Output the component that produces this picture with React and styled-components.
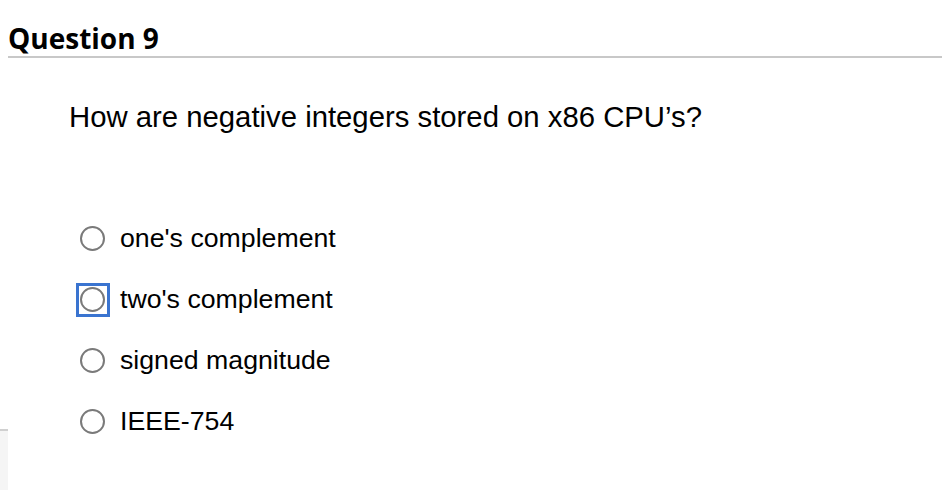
import React from 'react';
import styled, { createGlobalStyle } from 'styled-components';

const Global = createGlobalStyle`
  html, body {
    margin: 0;
    padding: 0;
    background: #fff;
  }
  body {
    width: 942px;
    height: 490px;
    overflow: hidden;
  }
`;

const Page = styled.div`
  position: relative;
  width: 942px;
  height: 490px;
  padding: 22px 0 0 8px;
  box-sizing: border-box;
`;

const Header = styled.h2`
  margin: 0;
  padding-bottom: 2px;
  font-family: "Open Sans", sans-serif;
  font-weight: 700;
  font-size: 28px;
  line-height: 32px;
  color: #000;
  border-bottom: 2px solid #c8c8c8;
`;

const Body = styled.div`
  padding: 43px 0 0 61px;
`;

const Prompt = styled.p`
  margin: 0;
  font-family: "Liberation Sans", Arial, sans-serif;
  font-size: 29.3px;
  line-height: 32px;
  color: #000;
`;

const Options = styled.div`
  display: flex;
  flex-direction: column;
  gap: 37px;
  margin-top: 93px;
  padding-left: 11px;
`;

const Option = styled.label`
  display: flex;
  align-items: center;
  gap: 15px;
  height: 24px;
  font-family: "Liberation Sans", Arial, sans-serif;
  font-size: 26.7px;
  color: #000;
`;

const Radio = styled.span`
  position: relative;
  width: 21px;
  height: 21px;
  border: 2px solid #7a7a7a;
  border-radius: 50%;
  flex-shrink: 0;

  ${(p) =>
    p.$focused &&
    `
    &::after {
      content: "";
      position: absolute;
      left: -6px;
      top: -6px;
      width: 28px;
      height: 28px;
      border: 3px solid #3a74d0;
    }
  `}
`;

const SidePanel = styled.div`
  position: absolute;
  left: 0;
  top: 429px;
  width: 8px;
  height: 61px;
  background: #f5f5f5;
  border-top: 2px solid #d0d0d0;
`;

const options = [
  "one's complement",
  "two's complement",
  'signed magnitude',
  'IEEE-754',
];

export default function App() {
  return (
    <>
      <Global />
      <Page>
        <Header>Question 9</Header>
        <Body>
          <Prompt>How are negative integers stored on x86 CPU’s?</Prompt>
          <Options>
            {options.map((o, i) => (
              <Option key={o}>
                <Radio $focused={i === 1} />
                {o}
              </Option>
            ))}
          </Options>
        </Body>
        <SidePanel />
      </Page>
    </>
  );
}
